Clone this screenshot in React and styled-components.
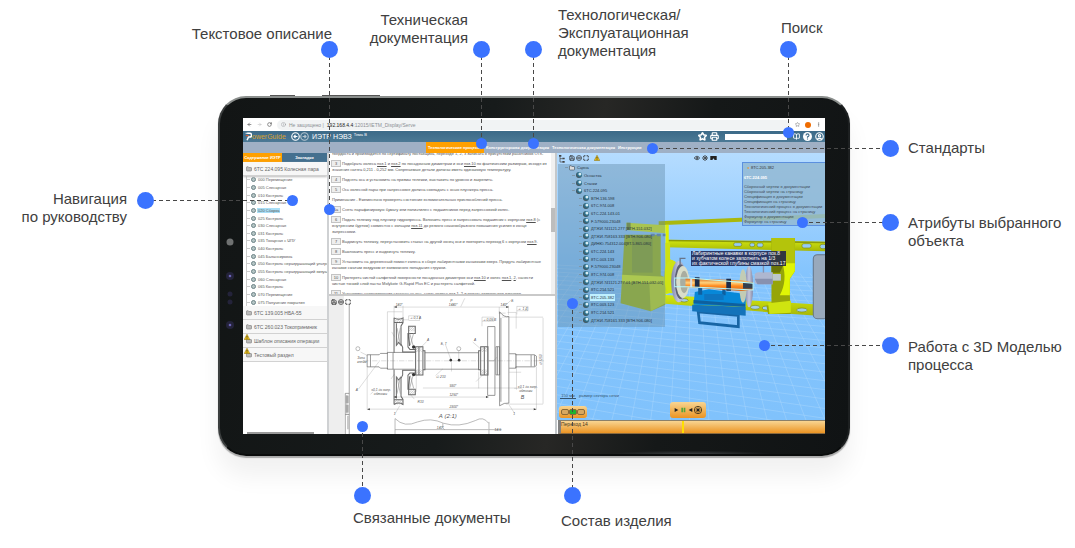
import styled, { createGlobalStyle, css } from 'styled-components';
import {
  ArrowLeft, ArrowRight, RotateCw, Info, Star, Printer, CircleUser, Folder,
  Save, Maximize, Eye, Sun, MoreVertical, BookOpen
} from 'lucide-react';

const BASE_WIDTH = 1075;

const callouts = [
  { id: 'text', lines: ['Текстовое описание'], label: [332, 25], align: 'right', dot: [329, 49], target: [329, 209] },
  { id: 'tech', lines: ['Техническая', 'документация'], label: [468, 11], align: 'right', dot: [481, 49], target: [481, 143] },
  { id: 'oper', lines: ['Технологическая/', 'Эксплуатационная', 'документация'], label: [558, 6], dot: [533, 49], target: [533, 143] },
  { id: 'search', lines: ['Поиск'], label: [781, 19], dot: [788, 49], target: [788, 132] },
  { id: 'std', lines: ['Стандарты'], label: [908, 139], dot: [890, 148], target: [652, 148] },
  { id: 'attr', lines: ['Атрибуты выбранного', 'объекта'], label: [908, 214], dot: [890, 222], target: [802, 222] },
  { id: 'model', lines: ['Работа с 3D Моделью', 'процесса'], label: [908, 338], dot: [890, 345], target: [764, 345] },
  { id: 'docs', lines: ['Связанные документы'], label: [353, 509], dot: [362, 495], target: [362, 426] },
  { id: 'parts', lines: ['Состав изделия'], label: [561, 512], dot: [572, 495], target: [572, 303] },
  { id: 'nav', lines: ['Навигация', 'по руководству'], label: [127, 190], align: 'right', dot: [145, 200], target: [292, 200] }
];

const operations = [
  '000 Перемещение', '005 Слесарная', '010 Контроль', '015 Слесарная', '020 Сборка',
  '025 Контроль', '030 Слесарная', '031 Контроль', '035 Токарная с ЧПУ', '040 Контроль',
  '045 Балансировка', '050 Контроль неразрушающий ультразвуковой', '055 Контроль неразрушающий визуальный',
  '060 Слесарная', '065 Контроль', '070 Перемещение', '075 Получение покрытия'
];

const sections = [
  { name: '6TC 139.005 НБА-55' },
  { name: '6TC 260.023 Токоприемник' },
  { name: 'Шаблон описания операции', warn: true },
  { name: 'Тестовый раздел', warn: true }
];

const parts = [
  { name: 'Сцена', level: 0 },
  { name: 'Оснастка', level: 1 },
  { name: 'Станки', level: 1 },
  { name: '6TC.224.095', level: 1 },
  { name: 'BTH.136.598', level: 2 },
  { name: '6TC.974.008', level: 2 },
  { name: '6TC.224.143-01', level: 2 },
  { name: 'F-579000.23048', level: 2 },
  { name: 'ДТЖИ.741121.277 [BTH.151.032]', level: 2 },
  { name: 'ДТЖИ.758163.333 [BTH.906.080]', level: 2 },
  { name: 'ДИНЮ.754312.004[8T.5.865.080]', level: 2 },
  { name: '6TC.224.143', level: 2 },
  { name: '8TC.003.133', level: 2 },
  { name: 'F-579000.23048', level: 2 },
  { name: '8TC.974.008', level: 2 },
  { name: 'ДТЖИ.741121.277-01 [BTH.151.032-01]', level: 2 },
  { name: '8TC.214.521', level: 2 },
  { name: '8TC.205.382', level: 2, active: true },
  { name: '8TC.003.123', level: 2 },
  { name: '8TC.214.521', level: 2 },
  { name: 'ДТЖИ.758161.333 [BTH.906.080]', level: 2 }
];

const attributes = [
  'Сборочный чертеж в документации', 'Сборочный чертеж на страницу',
  'Спецификация в документации', 'Спецификация на страницу',
  'Технологический процесс в документации', 'Технологический процесс на страницу',
  'Формуляр в документации', 'Формуляр на страницу'
];

const GlobalStyle = createGlobalStyle`
  * { box-sizing: border-box; }
  body {
    margin: 0;
    background: #fff;
    font-family: "Liberation Sans", Arial, sans-serif;
    overflow-x: hidden;
  }
  button, input { font: inherit; border: 0; margin: 0; padding: 0; background: none; color: inherit; }
  button { cursor: pointer; white-space: nowrap; }
  a { color: inherit; }
  svg { display: block; flex: none; }
`;

const Stage = styled.main`
  position: relative;
  display: grid;
  grid-template-columns: 218fr 632fr 225fr;
  padding: 95px 0 91px;
`;

const at = (x) => `calc(100% * ${x} / ${BASE_WIDTH})`;

const Label = styled.p`
  position: absolute;
  z-index: 3;
  top: ${(p) => p.$y}px;
  ${(p) => (p.$right ? css`right: ${at(BASE_WIDTH - p.$x)};` : css`left: ${at(p.$x)};`)}
  margin: 0;
  font-size: 15px;
  line-height: 18px;
  color: #404040;
  white-space: pre;
  text-align: ${(p) => (p.$right ? 'right' : 'left')};
`;

const Dot = styled.span`
  position: absolute;
  z-index: 3;
  left: ${(p) => at(p.$x)};
  top: ${(p) => p.$y}px;
  width: ${(p) => (p.$small ? 11 : 17)}px;
  height: ${(p) => (p.$small ? 11 : 17)}px;
  margin: ${(p) => (p.$small ? '-5px' : '-8px')};
  border-radius: 50%;
  background: #3b73ff;
`;

const Lead = styled.span`
  position: absolute;
  z-index: 2;
  left: ${(p) => at(Math.min(p.$from[0], p.$to[0]))};
  top: ${(p) => Math.min(p.$from[1], p.$to[1])}px;
  ${(p) => (p.$from[1] === p.$to[1]
    ? css`
      width: ${at(Math.abs(p.$from[0] - p.$to[0]))};
      height: 1px;
      background: repeating-linear-gradient(90deg, #484848 0 4px, transparent 4px 7px);`
    : css`
      width: 1px;
      height: ${Math.abs(p.$from[1] - p.$to[1])}px;
      background: repeating-linear-gradient(180deg, #484848 0 4px, transparent 4px 7px);`)}
`;

const Tablet = styled.section`
  grid-column: 2;
  position: relative;
`;

const SideButtons = styled.div`
  display: flex;
  gap: 27px;
  height: 1px;
  padding-left: 52px;
  span { width: 58px; background: #555; }
  span:first-child { width: 25px; }
`;

const Bezel = styled.div`
  position: relative;
  padding: 20px 23px 20px;
  border: 2px solid #1d2021;
  border-top-color: #8b8f8d;
  border-left-color: #3b3e3e;
  border-bottom-color: #0a0c0c;
  border-radius: 28px;
  background:
    radial-gradient(ellipse at 75% 100%, #3c4042 0, transparent 12%) bottom / 100% 20px no-repeat,
    linear-gradient(100deg, #121515 0, #171b1b 40%, #272725 56%, #151818 72%, #101314 100%);
  box-shadow: 0 2px 1px #aaa, 0 20px 24px rgba(0, 0, 0, 0.06);
`;

const Sensors = styled.svg`
  position: absolute;
  left: 4px;
  top: 138px;
`;

const Screen = styled.div`
  height: 316px;
  display: flex;
  flex-direction: column;
  overflow: hidden;
  background: #fff;
`;

const BrowserBar = styled.div`
  display: flex;
  align-items: center;
  gap: 5px;
  flex: 0 0 13px;
  padding: 0 4px;
  color: #555;
`;

const Address = styled.div`
  flex: 1;
  display: flex;
  align-items: center;
  gap: 3px;
  height: 10px;
  padding: 0 4px;
  border-radius: 5px;
  background: #f1f3f4;
  font-size: 5px;
  color: #8c9094;
  b { font-weight: 400; color: #222; }
`;

const Profile = styled.span`
  width: 6px;
  height: 6px;
  border-radius: 50%;
  background: #ef6c00;
`;

const Header = styled.header`
  display: flex;
  align-items: center;
  gap: 3px;
  flex: 0 0 11px;
  padding: 0 1px 0 2px;
  background: linear-gradient(#3c6a88, #4b7995);
  color: #fff;
`;

const Brand = styled.span`
  display: flex;
  align-items: center;
  width: 43px;
  font-size: 7px;
  color: #d9a12f;
`;

const History = styled.span`
  display: flex;
`;

const Title = styled.h1`
  flex: 1;
  margin: 0;
  font-size: 7px;
  font-weight: 400;
  line-height: 9px;
  sup { font-size: 4px; line-height: 1px; }
`;

const Search = styled.input`
  width: 62px;
  height: 6px;
  margin: 0 3px;
  background: #fff;
`;

const Nav = styled.nav`
  display: flex;
  align-items: stretch;
  flex: 0 0 11px;
  padding-left: 183px;
  background: #9fb0c5;
`;

const NavTab = styled.button`
  padding: 0 2px;
  width: ${(p) => p.$w}px;
  text-align: left;
  font-size: 4px;
  font-weight: 700;
  color: #fff;
  background: ${(p) => (p.$active ? '#ffa000' : 'transparent')};
`;

const Body = styled.div`
  flex: 1;
  min-height: 0;
  display: grid;
  grid-template-columns: 84fr 230fr 268fr;
`;

const Sidebar = styled.aside`
  display: flex;
  flex-direction: column;
  min-width: 0;
  overflow: hidden;
  background: #fff;
`;

const Tabs = styled.div`
  display: grid;
  grid-template-columns: 39fr 45fr;
  flex: 0 0 9px;
`;

const SideTab = styled.button`
  font-size: 4px;
  font-weight: 700;
  color: #fff;
  background: ${(p) => (p.$active ? '#ffa000' : '#44708f')};
`;

const Section = styled.button`
  position: relative;
  display: flex;
  align-items: center;
  gap: 2px;
  flex: 0 0 14px;
  padding: 0 3px;
  border-bottom: 1px solid #d2d2d2;
  background: #f7f7f7;
  font-size: 5px;
  color: #666;
  box-shadow: ${(p) => (p.$open ? '0 1px 2px #bbb' : 'none')};
`;

const Warn = styled.span`
  position: absolute;
  left: 1px;
  top: 0;
`;

const OperationTree = styled.div`
  display: grid;
  grid-auto-rows: 1fr;
  grid-template-columns: 100%;
  flex: 0 0 130px;
  margin-left: 3px;
  border-left: 1px solid #ccc;
`;

const Operation = styled.button`
  display: flex;
  align-items: center;
  justify-content: flex-start;
  gap: 1px;
  font-size: 4px;
  color: #555;
  &::before { content: ''; flex: none; width: 3px; border-top: 1px solid #ccc; }
  span { padding: 0 1px; background: ${(p) => (p.$active ? '#a9dff7' : 'transparent')}; }
`;

const Gear = styled.i`
  flex: none;
  width: 5px;
  height: 5px;
  border: 1px solid #6d8387;
  border-radius: 50%;
  background: #b4c4c4;
`;

const SideScroll = styled.div`
  width: 67px;
  height: 2px;
  margin: auto 0 0 4px;
  background: #9a9a9a;
`;

const Docs = styled.section`
  display: grid;
  grid-template-rows: 143px 1fr;
  min-width: 0;
  border-left: 2px solid #cfd1d3;
  border-right: 2px solid #c4c8cb;
`;

const TextPane = styled.article`
  display: grid;
  grid-template-columns: 1fr 4px;
  overflow: hidden;
  border-bottom: 2px solid #c9c9c9;
`;

// The list is shown scrolled, so its first line is tucked under the nav bar
const Steps = styled.div`
  display: flex;
  flex-direction: column;
  gap: 4px;
  height: 143px;
  min-width: 0;
  margin-top: -2px;
  padding-left: 3px;
  overflow: hidden;
  font-size: 4px;
  line-height: 6px;
  color: #505050;
  p { flex: none; margin: 0; white-space: pre; }
`;

const Num = styled.span`
  display: inline-block;
  min-width: 8px;
  margin-right: 2px;
  outline: 1px solid #c4c4c4;
  background: #eee;
  line-height: 5px;
  text-align: center;
`;

const ScrollTrack = styled.div`
  background: #f1f1f1;
  padding: 55px 0 0;
  &::before { content: ''; display: block; height: 24px; background: #bdbdbd; }
`;

const DrawingPane = styled.div`
  position: relative;
  min-width: 0;
  overflow: hidden;
  background: #fff;
  & > svg { width: 100%; height: 100%; }
`;

const PaneTools = styled.div`
  position: absolute;
  top: 3px;
  left: 2px;
  display: flex;
  gap: 1px;
  color: #333;
`;

const Viewer = styled.section`
  display: flex;
  flex-direction: column;
  min-width: 0;
`;

const SceneBox = styled.div`
  position: relative;
  flex: 1;
  overflow: hidden;
  background: linear-gradient(#b5dcff, #84c4fd 45%, #80c2fc);
  & > svg { position: absolute; width: 100%; height: 100%; }
`;

const SceneTools = styled.div`
  position: absolute;
  top: 2px;
  left: ${(p) => p.$x};
  display: flex;
  gap: ${(p) => p.$gap || 1}px;
  color: #333;
`;

const PartsPanel = styled.div`
  position: absolute;
  top: 11px;
  left: 1px;
  width: 40%;
  height: 163px;
  display: grid;
  grid-auto-rows: 1fr;
  overflow: hidden;
  padding-bottom: 3px;
  background: rgba(98, 138, 168, 0.42);
`;

const Part = styled.button`
  display: flex;
  align-items: center;
  gap: 1px;
  padding-left: ${(p) => 7 + p.$level * 7}px;
  font-size: 4px;
  color: #26333e;
  &::before { content: ''; width: 3px; border-top: 1px solid #8098aa; }
  span { padding: 1px; background: ${(p) => (p.$active ? '#bff0ff' : 'transparent')}; }
`;

const Globe = styled.i`
  flex: none;
  width: 6px;
  height: 6px;
  border-radius: 50%;
  background: radial-gradient(circle at 65% 35%, #d9edf3 0 15%, #2c7594 35%, #444e50 75%);
`;

const AttrPanel = styled.div`
  position: absolute;
  right: 0;
  top: 9px;
  width: 31%;
  height: 64px;
  padding: 2px 1px;
  border: 1px solid #5b90df;
  border-right: 0;
  background: rgba(146, 184, 212, 0.85);
  font-size: 4px;
  line-height: 5px;
  color: #3f4c57;
  white-space: nowrap;
  h2, h3, ul { margin: 0; padding: 0; font-size: 4px; font-weight: 400; list-style: none; }
  h2 { padding-left: 3px; color: #333; }
  h2::before { content: '◂'; margin-right: 2px; color: #f09a2a; }
  h3 { margin: 5px 0 4px; font-weight: 700; color: #fff; }
`;

const Tooltip = styled.div`
  position: absolute;
  left: 50%;
  top: 98px;
  padding: 0 1px;
  background: rgba(25, 30, 75, 0.85);
  font-size: 5px;
  line-height: 5px;
  color: #fff;
  white-space: pre;
`;

const ScaleNote = styled.span`
  position: absolute;
  left: 3px;
  bottom: 21px;
  display: flex;
  gap: 3px;
  font-size: 4px;
  color: #355570;
  span { width: 16px; border-bottom: 1px solid #355570; text-align: center; }
`;

const Pill = styled.div`
  position: absolute;
  left: ${(p) => p.$x};
  bottom: ${(p) => p.$bottom}px;
  width: ${(p) => p.$w}px;
  height: ${(p) => p.$h}px;
  display: flex;
  align-items: center;
  justify-content: center;
  gap: ${(p) => p.$gap}px;
  border-radius: 3px;
  background: linear-gradient(#f8d592, #eb9423);
`;

const Chip = styled.button`
  width: 8px;
  height: 6px;
  && { border: 1px solid #8a6a38; background: ${(p) => (p.$on ? '#1cb52e' : '#d8a860')}; }
  border-radius: 2px;
`;

const Timeline = styled.div`
  flex: 0 0 14px;
  display: grid;
  grid-template-columns: 121fr 144fr;
  margin-left: 1px;
  border-left: 3px solid #808080;
  border-top: 1px solid #8b8069;
  border-bottom: 1px solid #8b6a3e;
  background: linear-gradient(#f8d592, #eb9423);
  font-size: 5px;
  line-height: 7px;
  color: #4a3820;
  & > :last-child { border-left: 2px solid #ffdf00; }
`;

function WarningIcon() {
  return (
    <svg width="6" height="6" viewBox="0 0 24 24">
      <path d="M12 1 23 22H1Z" fill="#f6c915" stroke="#806400" strokeWidth="2" />
      <path d="M12 8v7M12 17v3" stroke="#222" strokeWidth="3" />
    </svg>
  );
}

function LogoMark() {
  return (
    <svg width="7" height="9" viewBox="0 0 24 30">
      <path d="M8 4h8a6 6 0 0 1 0 13h-4l-5 11" fill="none" stroke="#fff" strokeWidth="5" />
      <path d="M3 12h9" stroke="#e85e2c" strokeWidth="4" />
      <path d="M2 4h9" stroke="#fff" strokeWidth="3" />
    </svg>
  );
}

function RoundArrow({ dim, flip }) {
  return (
    <svg width="9" height="9" viewBox="0 0 24 24" fill="none" stroke={dim ? '#b5c5d0' : '#fff'} strokeWidth="3">
      <circle cx="12" cy="12" r="10" />
      <path d={flip ? 'M7 12h9M12 8l4 4-4 4' : 'M17 12H8M12 8l-4 4 4 4'} />
    </svg>
  );
}

function TreeIcon() {
  return (
    <svg width="6" height="8" viewBox="0 0 18 24" fill="#444">
      <path d="M0 0h7v5H0zM10 8h7v5h-7zM10 18h7v5h-7z" />
      <path d="M3 5v16h7M3 11h7" fill="none" stroke="#444" strokeWidth="2" />
    </svg>
  );
}

function PaneIcons() {
  return (
    <>
      <Save size={6} strokeWidth={3} />
      <svg width="6" height="6" viewBox="0 0 24 24" fill="none" stroke="#444" strokeWidth="3">
        <circle cx="12" cy="12" r="10" />
        <circle cx="12" cy="12" r="4" />
        <path d="M2 12h6M16 12h6" />
      </svg>
      <Maximize size={6} strokeWidth={4} />
    </>
  );
}

function CameraDots() {
  return (
    <Sensors width="12" height="96" viewBox="0 0 12 96">
      <circle cx="6" cy="6" r="3.5" fill="#6f7171" />
      <g fill="#24233a">
        <circle cx="6" cy="40" r="4" />
        <circle cx="6" cy="58" r="2.5" />
        <circle cx="6" cy="66" r="2.5" />
        <circle cx="6" cy="89" r="4" />
      </g>
      <circle cx="6" cy="40" r="1.3" fill="#6a63b5" />
      <circle cx="6" cy="89" r="1.3" fill="#6a63b5" />
    </Sensors>
  );
}

// Wheelset section: units are a third of a pixel at the default pane size
function WheelsetDrawing() {
  return (
    <svg viewBox="-33 15 681 411" preserveAspectRatio="none" fill="none" stroke="#999" strokeWidth="2">
      <defs>
        <pattern id="hatch" width="5" height="5" patternUnits="userSpaceOnUse" patternTransform="rotate(45)">
          <path d="M0 0v5" stroke="#888" strokeWidth="2" />
        </pattern>
      </defs>
      <path d="M-33 15h45v411h-45z" fill="#eee" stroke="none" />
      <path d="M28 40v390M16 305v122M16 305h12M16 368h12M21 310v55M24 372v40" stroke="#777" />
      <path d="M17 312h9v22h-9zM17 340h9v22h-9z" fill="#aaa" stroke="none" />
      <g strokeWidth="1" stroke="#999">
        <path d="M163 48h346M163 44v36M190 44v34M143 62h45M143 62v122M480 48v20M508 44v28M505 64h26v48M479 66h20" />
        <path d="M82 225v128M82 352h510M592 225v128M162 316h286M250 289h282M230 240v60M418 240v50M532 190v104M488 78h124M612 80v256M500 337h112" />
        <path d="M70 208h545" strokeDasharray="16 4 3 4" />
        <path d="M156 122l8 14M118 210l-62 82M62 182l20 10M262 150l-20 20M400 152l26 22M318 160l16 44M358 176v26M336 212v28M288 252l22-20M410 270l20-20M376 22l-12 25M515 28l-18 16M510 340l16 24M166 366l14-24M224 322l-14-16M154 262l10-14M100 300l-8 8" />
        <path d="M190 86h17v-12h33v14h-33M428 105V78h36v12h-36M533 70V46h34v13h-34M510 242h36M525 290h22" />
      </g>
      <path d="M82 190h36l4-4h21v-3h84M82 226h36l4 4h21v3h84M82 190v36M92 190v36M143 184v49M160 184v49M256 184h162M256 233h162M510 187h20v3h56l6 4v28l-6 4h-56v4h-20M530 188v41M576 191v34M586 191v34" stroke="#666" />
      <path d="M228 166h22v84h-22zM238 166v84M256 182v53M250 178h6v57h-6M424 166h22v84h-22zM435 166v84M418 182v52M424 178h-6v57h6" stroke="#666" strokeWidth="3" />
      <path d="M163 80q14 8 27 0v15l-6 9v54l5 10v14h38v-8h-16l-6-7v-40h22v-22h-20v22l3 37M163 80v104M163 94h27M170 96v66l7-9 7 9" stroke="#666" strokeWidth="3" />
      <path d="M163 338q14-8 27 0v-15l-6-9v-54l5-10v-14h38v8h-16l-6 7v42h22v16h-20v-16l3-39M163 338v-104M163 324h27M170 320v-64l7 9 7-9" stroke="#666" strokeWidth="3" />
      <path d="M163 80h27v16h-27zM163 322h27v16h-27zM205 105h22v15h-22zM207 296h20v12h-20zM228 168h18v14h-18zM228 234h18v14h-18zM426 168h18v14h-18zM426 234h18v14h-18z" fill="url(#hatch)" stroke="none" />
      <path d="M210 126l10 35M222 126l-10 35M210 290l10-38M222 290l-10-38M172 110l10 50M182 110l-10 50M172 306l10-50M182 306l-10-50" strokeWidth="2" />
      <path d="M445 106h22v205h-22zM481 62q14 18 28 14v258q-14-2-28 8zM470 166h11v84h-11zM485 80v250M475 166v84" stroke="#666" />
      <path d="M445 208h22M464 208l8-10" />
      <path d="M166 380q28 28 68 10 40-14 78 4 46 14 96-8 24-14 40 8M166 380v46M449 390v36M166 413h282M310 394v14l6 6M449 413h38" strokeWidth="2" />
      <g fill="#333" stroke="none">
        <circle cx="334" cy="206" r="4" />
        <circle cx="359" cy="206" r="4" />
        <circle cx="222" cy="167" r="5" />
        <circle cx="222" cy="249" r="5" />
        <path d="m82 352 8-3v6zM592 352l-8-3v6zM163 48l8-3v6zM509 48l-8-3v6zM162 316l8-3v6zM448 316l-8-3v6z" />
      </g>
      <circle cx="54" cy="172" r="6" />
      <circle cx="358" cy="172" r="6" />
      <g fill="#555" stroke="none" fontSize="10" fontFamily="Liberation Sans" fontStyle="italic">
        <text x="168" y="44">140*</text>
        <text x="328" y="46">1440*</text>
        <text x="484" y="46">140*</text>
        <text x="210" y="84">⊥ 0,1 А</text>
        <text x="430" y="88">⊥ 0,05 В</text>
        <text x="538" y="56">⊥ 1 Д</text>
        <text x="52" y="204">Зона</text>
        <text x="52" y="216">клейм</text>
        <text x="330" y="286">930*</text>
        <text x="330" y="313">1250*</text>
        <text x="330" y="348">2300*</text>
        <text x="94" y="298">±0,1 до запр.</text>
        <text x="102" y="310">обточки</text>
        <text x="536" y="289">±0,1 до запр.</text>
        <text x="540" y="301">обточки</text>
        <text x="290" y="260">∅ 210</text>
        <text x="304" y="162">Б, Т</text>
        <text x="262" y="150">А</text>
        <text x="404" y="150">А</text>
        <text x="332" y="32">Р</text>
        <text x="516" y="32">Б</text>
        <text x="48" y="298">А</text>
        <text x="522" y="370">1</text>
        <text x="162" y="369">1</text>
        <text x="234" y="334">R10</text>
        <text x="466" y="418">14.5</text>
        <text x="292" y="410">140*</text>
        <text x="545" y="322" fontSize="16">В</text>
        <text x="298" y="377" fontSize="18">А (2:1)</text>
        <text transform="translate(608 220) rotate(-90)">∅1250</text>
      </g>
    </svg>
  );
}

const gridFan = Array.from({ length: 44 }, (_, i) => i);
const gridRows = Array.from({ length: 26 }, (_, i) => i);

function MachineScene() {
  return (
    <svg viewBox="-216 -171 801 801" preserveAspectRatio="none">
      <defs>
        <linearGradient id="axle" x1="0" x2="0" y1="0" y2="1">
          <stop offset="0" stopColor="#d9681a" />
          <stop offset="0.35" stopColor="#ffd27e" />
          <stop offset="0.6" stopColor="#ff8a1e" />
          <stop offset="1" stopColor="#d9681a" />
        </linearGradient>
        <linearGradient id="beam" x1="0" x2="0" y1="0" y2="1">
          <stop offset="0" stopColor="#d3e812" />
          <stop offset="1" stopColor="#a5b505" />
        </linearGradient>
        <linearGradient id="disc" x1="0" x2="1">
          <stop offset="0" stopColor="#7f86ad" />
          <stop offset="0.5" stopColor="#c6c9dd" />
          <stop offset="1" stopColor="#8388a6" />
        </linearGradient>
      </defs>
      <g stroke="#b4dcff" strokeWidth="1.5" opacity="0.75">
        {gridFan.map((i) => (
          <line key={i} x1={-420 + i * 30} y1="190" x2={-980 + i * 58} y2="630" />
        ))}
        {gridRows.map((i) => (
          <line key={i} x1="-216" y1={165 + i * i * 0.35 + i * 10} x2="585" y2={205 + i * i * 0.45 + i * 12} />
        ))}
      </g>
      <path d="M88 34 585 12v12L88 46z" fill="#aab80c" />
      <path d="M110 89l475 6v29l-475-12z" fill="url(#beam)" />
      <path d="M110 89l475 6v5L110 94z" fill="#8e9c08" />
      <g fill="#95caf5" stroke="#7f8b0a" strokeWidth="2">
        <rect x="312" y="98" width="24" height="11" rx="5" />
        <rect x="360" y="99" width="15" height="11" rx="5" />
        <rect x="382" y="99" width="18" height="12" rx="5" />
        <rect x="516" y="101" width="28" height="13" rx="6" />
        <rect x="570" y="103" width="18" height="13" rx="6" />
      </g>
      <path d="M108 44h10v105l20 6v88l-28 10z" fill="#dcf000" />
      <path d="M108 98h14v50l16 8v86l-30 8z" fill="#cde010" />
      <path d="M108 255l477 30v34l-140-10-337-28z" fill="url(#beam)" />
      <g fill="#a2cdec" stroke="#7f8b0a" strokeWidth="2">
        <ellipse cx="164" cy="271" rx="12" ry="5" />
        <ellipse cx="376" cy="292" rx="14" ry="6" />
        <ellipse cx="411" cy="294" rx="14" ry="6" />
        <ellipse cx="516" cy="300" rx="16" ry="6" />
      </g>
      {/* left housing */}
      <path d="M-14 74h108v122l14 8v80l-44 20-90-24z" fill="#a6bb10" />
      <path d="M-8 38 108 46v24L-8 60z" fill="#dcee14" />
      <path d="M-8 38h12v22H-8z" fill="#7f9020" />
      <path d="M-22 194 108 200v18l-130-2z" fill="#e2f414" />
      <path d="M8 78h62v110H8z" fill="#93a81c" />
      <path d="M60 220l48-6v66l-44 24z" fill="#cadd14" />
      <path d="M64 75h44" stroke="#6484a8" strokeWidth="8" strokeDasharray="12 6" />
      {/* right support */}
      <path d="M425 84h70v100l-15 22v52l3 54h-68l-5-24 15-5z" fill="#96a509" />
      <path d="M425 84h70v82h-70z" fill="#b4c40b" />
      <path d="M458 160h37v24l-15 22v50h-30c16-30 18-60 8-96z" fill="#e0f505" />
      <path d="M425 166h35l-10 22h-25z" fill="#6a7508" />
      <path d="M415 280l68-8v36l-64 4z" fill="#cfe410" />
      {/* bench */}
      <path d="M206 306l120 10v34l-116-12z" fill="none" stroke="#1765a5" strokeWidth="8" />
      <path d="M188 284l160 7v26l-160-13z" fill="#1473ba" />
      <path d="M196 246l42-8 110 14v38l-156-6z" fill="#0788d8" />
      <path d="M192 270l154 12v8l-154-10z" fill="#0e609e" />
      <path d="M206 224h12v30h-12zM278 228h10v28h-10z" fill="#0f5f9f" />
      <path d="M224 252h58v18h-58z" fill="#0e75c0" />
      {/* wheelset */}
      <ellipse cx="126" cy="200" rx="22" ry="50" fill="#cfe313" />
      <ellipse cx="148" cy="215" rx="23" ry="62" fill="url(#disc)" />
      <ellipse cx="153" cy="215" rx="17" ry="52" fill="#5e6273" />
      <ellipse cx="160" cy="216" rx="20" ry="48" fill="#d9ddca" />
      <ellipse cx="164" cy="216" rx="12" ry="34" fill="#a9ada0" />
      <ellipse cx="358" cy="230" rx="12" ry="62" fill="url(#disc)" />
      <ellipse cx="340" cy="228" rx="11" ry="50" fill="#c2ccb5" />
      <path d="M168 205l166 6 36 6v22l-36 4-166-12z" fill="url(#axle)" />
      <path d="M196 202h14v30h-14zM290 206h14v36h-14z" fill="#1d2c48" />
      <path d="M340 218h30v18h-30z" fill="#34404e" />
      <path d="M182 206h6v26h-6z" fill="#ddd" />
      <path d="M136 204h40l194 16v20l-194-10h-40z" fill="none" stroke="#b8faff" strokeWidth="3" />
      <path d="M152 165v-20h16" fill="none" stroke="#68758a" strokeWidth="4" />
      {/* spindle */}
      <path d="M375 192q4-5 10-5h44v36h-44q-8 0-10-6z" fill="#aeb7d0" />
      <path d="M375 206h54v17h-46z" fill="#8891ae" />
      <path d="M429 192h24v20h-24z" fill="#bcc7cc" />
      <path d="M401 154v34" stroke="#8891ae" strokeWidth="4" />
      <rect x="550" y="134" width="44" height="192" rx="12" fill="#98a9bc" stroke="#667688" strokeWidth="3" />
    </svg>
  );
}

function Sidenav() {
  return (
    <Sidebar>
      <Tabs>
        <SideTab $active>Содержание ИЭТР</SideTab>
        <SideTab>Закладки</SideTab>
      </Tabs>
      <Section $open>
        <Folder size={6} fill="#bbb" />6TC 224.095 Колесная пара
      </Section>
      <OperationTree>
        {operations.map((name) => (
          <Operation key={name} $active={name.startsWith('020')}>
            <Gear /><span>{name}</span>
          </Operation>
        ))}
      </OperationTree>
      {sections.map((s) => (
        <Section key={s.name}>
          <Folder size={6} fill="#bbb" />{s.name}
          {s.warn && <Warn><WarningIcon /></Warn>}
        </Section>
      ))}
      <SideScroll />
    </Sidebar>
  );
}

function Instructions() {
  return (
    <TextPane>
      <Steps>
        <p>твердость и производится по сертификату поставщика, переходе 1, 2, 3 записать в присутствии работников ОТК.</p>
        <p><Num>3</Num>Подобрать колеса <a href="#p1">поз.1</a> и <a href="#p2">поз.2</a> по посадочным диаметрам и оси <a href="#p10">поз.10</a> по фактическим размерам, исходя из{'\n'}значения натяга 0,211 - 0,252 мм. Сопрягаемые детали должны иметь одинаковую температуру.</p>
        <p><Num>4</Num>Поднять ось и установить на призмы тележки, выставить по уровню и закрепить.</p>
        <p><Num>5</Num>Ось колесной пары при напрессовке должна совпадать с осью плунжера пресса.</p>
        <p>Примечание - Ежемесячно проверять состояние вспомогательных приспособлений пресса.</p>
        <p><Num>5а</Num>Снять парафинировую бумагу или полиэтилен с подшипников перед запрессовкой колес.</p>
        <p><Num>6</Num>Подать тележку под плунжер гидропресса. Включить пресс и запрессовать подшипник с корпусом <a href="#p8">поз.8</a> (с{'\n'}внутренним буртом) совместно с кольцом <a href="#p11">поз.11</a> до резкого скачкообразного повышения усилия в конце{'\n'}запрессовки.</p>
        <p><Num>7</Num>Выдвинуть тележку, переустановить стакан на другой конец оси и повторить переход 6 с корпусом <a href="#p9">поз.9</a>.</p>
        <p><Num>8</Num>Выключить пресс и выдвинуть тележку.</p>
        <p><Num>9</Num>Установить на деревянный помост колеса в сборе лабиринтными канавками вверх. Продуть лабиринтные{'\n'}канавки сжатым воздухом от возможного попадания стружки.</p>
        <p><Num>10</Num>Протереть чистой салфеткой поверхности посадочных диаметров оси <a href="#p10">поз.10</a> и колес <a href="#p1">поз.1</a>, <a href="#p2">2</a>, нанести{'\n'}чистые тонкий слой пасты Molykote G-Rapid Plus EC и растереть салфеткой.</p>
        <p><Num>11</Num>Установить направляющие стаканы на ось, снять колеса поз.1, 2 и подать тележку под плунжер</p>
      </Steps>
      <ScrollTrack />
    </TextPane>
  );
}

function Viewer3D() {
  return (
    <Viewer>
      <SceneBox>
        <MachineScene />
        <SceneTools $x="2px"><TreeIcon /></SceneTools>
        <SceneTools $x="12px"><PaneIcons /></SceneTools>
        <SceneTools $x="37px"><WarningIcon /></SceneTools>
        <SceneTools $x="51%" $gap={2}>
          <Eye size={6} strokeWidth={3} />
          <Sun size={6} strokeWidth={4} />
          <svg width="7" height="6" viewBox="0 0 24 18"><path d="M1 2h22v14h-7l-4-6-4 6H1z" fill="#222" /></svg>
        </SceneTools>
        <PartsPanel>
          {parts.map((p, i) => (
            <Part key={i} $level={p.level} $active={p.active}>
              {p.level === 0 ? <Folder size={6} fill="#ddd" /> : <Globe />}
              <span>{p.name}</span>
            </Part>
          ))}
        </PartsPanel>
        <AttrPanel>
          <h2>8TC.205.382</h2>
          <h3>6TC.224.095</h3>
          <ul>{attributes.map((a) => <li key={a}>{a}</li>)}</ul>
        </AttrPanel>
        <Tooltip>{'Лабиринтные канавки в корпусе поз.8\nи зубчатом колесе заполнить на 1/3\nих фактической глубины смазкой поз.17'}</Tooltip>
        <ScaleNote><span>150 мм</span>размер сектора сетки</ScaleNote>
        <Pill $x="2px" $bottom={2} $w={28} $h={12} $gap={0}>
          <Chip aria-label="Вид 1" /><Chip $on aria-label="Вид 2" /><Chip aria-label="Вид 3" />
        </Pill>
        <Pill $x="42%" $bottom={2} $w={36} $h={16} $gap={0}>
          <svg width="32" height="10" viewBox="0 0 96 30">
            <path d="M8 9l11 6-11 6zM61 9l-11 6 11 6z" fill="#222" />
            <path d="M28 8h5v14h-5zM35 8h5v14h-5z" fill="#54a73c" />
            <circle cx="78" cy="15" r="11" fill="none" stroke="#3a2c14" strokeWidth="2.5" />
            <circle cx="78" cy="15" r="6" fill="none" stroke="#3a2c14" strokeWidth="2" />
            <path d="M75 12h6v6h-6z" fill="#222" />
          </svg>
        </Pill>
      </SceneBox>
      <Timeline><span>Переход 14</span><span /></Timeline>
    </Viewer>
  );
}

export default function App() {
  return (
    <>
      <GlobalStyle />
      <Stage>
        <Tablet>
          <SideButtons><span /><span /></SideButtons>
          <Bezel>
            <CameraDots />
            <Screen>
              <BrowserBar>
                <ArrowLeft size={5} strokeWidth={3} />
                <ArrowRight size={5} color="#aaa" />
                <RotateCw size={5} strokeWidth={3} />
                <Address>
                  <Info size={5} />Не защищено | <span><b>192.168.4.4</b>:12015/IETM_Display/Serve</span>
                </Address>
                <Star size={5} />
                <Profile />
                <MoreVertical size={5} />
              </BrowserBar>
              <Header>
                <Brand><LogoMark />owerGuide</Brand>
                <History>
                  <RoundArrow />
                  <RoundArrow dim flip />
                </History>
                <Title>ИЭТР НЭВЗ <sup>Тема В</sup></Title>
                <Star size={9} strokeWidth={4} />
                <Printer size={9} strokeWidth={3} />
                <Search aria-label="Поиск" />
                <BookOpen size={7} strokeWidth={3} />
                <svg width="9" height="9" viewBox="0 0 24 24">
                  <circle cx="12" cy="12" r="12" fill="#fff" />
                  <path d="M8 9q0-4 4-4t4 4q0 2-4 4v2M12 17v3" fill="none" stroke="#3c6a88" strokeWidth="3" />
                </svg>
                <CircleUser size={9} strokeWidth={3} />
              </Header>
              <Nav>
                <NavTab $w={58} $active>Технологические процессы</NavTab>
                <NavTab $w={66}>Конструкторская документация</NavTab>
                <NavTab $w={66}>Технологическая документация</NavTab>
                <NavTab $w={32}>Инструкции</NavTab>
              </Nav>
              <Body>
                <Sidenav />
                <Docs>
                  <Instructions />
                  <DrawingPane>
                    <WheelsetDrawing />
                    <PaneTools><PaneIcons /></PaneTools>
                  </DrawingPane>
                </Docs>
                <Viewer3D />
              </Body>
            </Screen>
          </Bezel>
        </Tablet>

        {callouts.map((c) => (
          <div key={c.id}>
            <Lead $from={c.dot} $to={c.target} />
            <Dot $x={c.dot[0]} $y={c.dot[1]} />
            <Dot $small $x={c.target[0]} $y={c.target[1]} />
            <Label $x={c.label[0]} $y={c.label[1]} $right={c.align === 'right'}>{c.lines.join('\n')}</Label>
          </div>
        ))}
      </Stage>
    </>
  );
}
